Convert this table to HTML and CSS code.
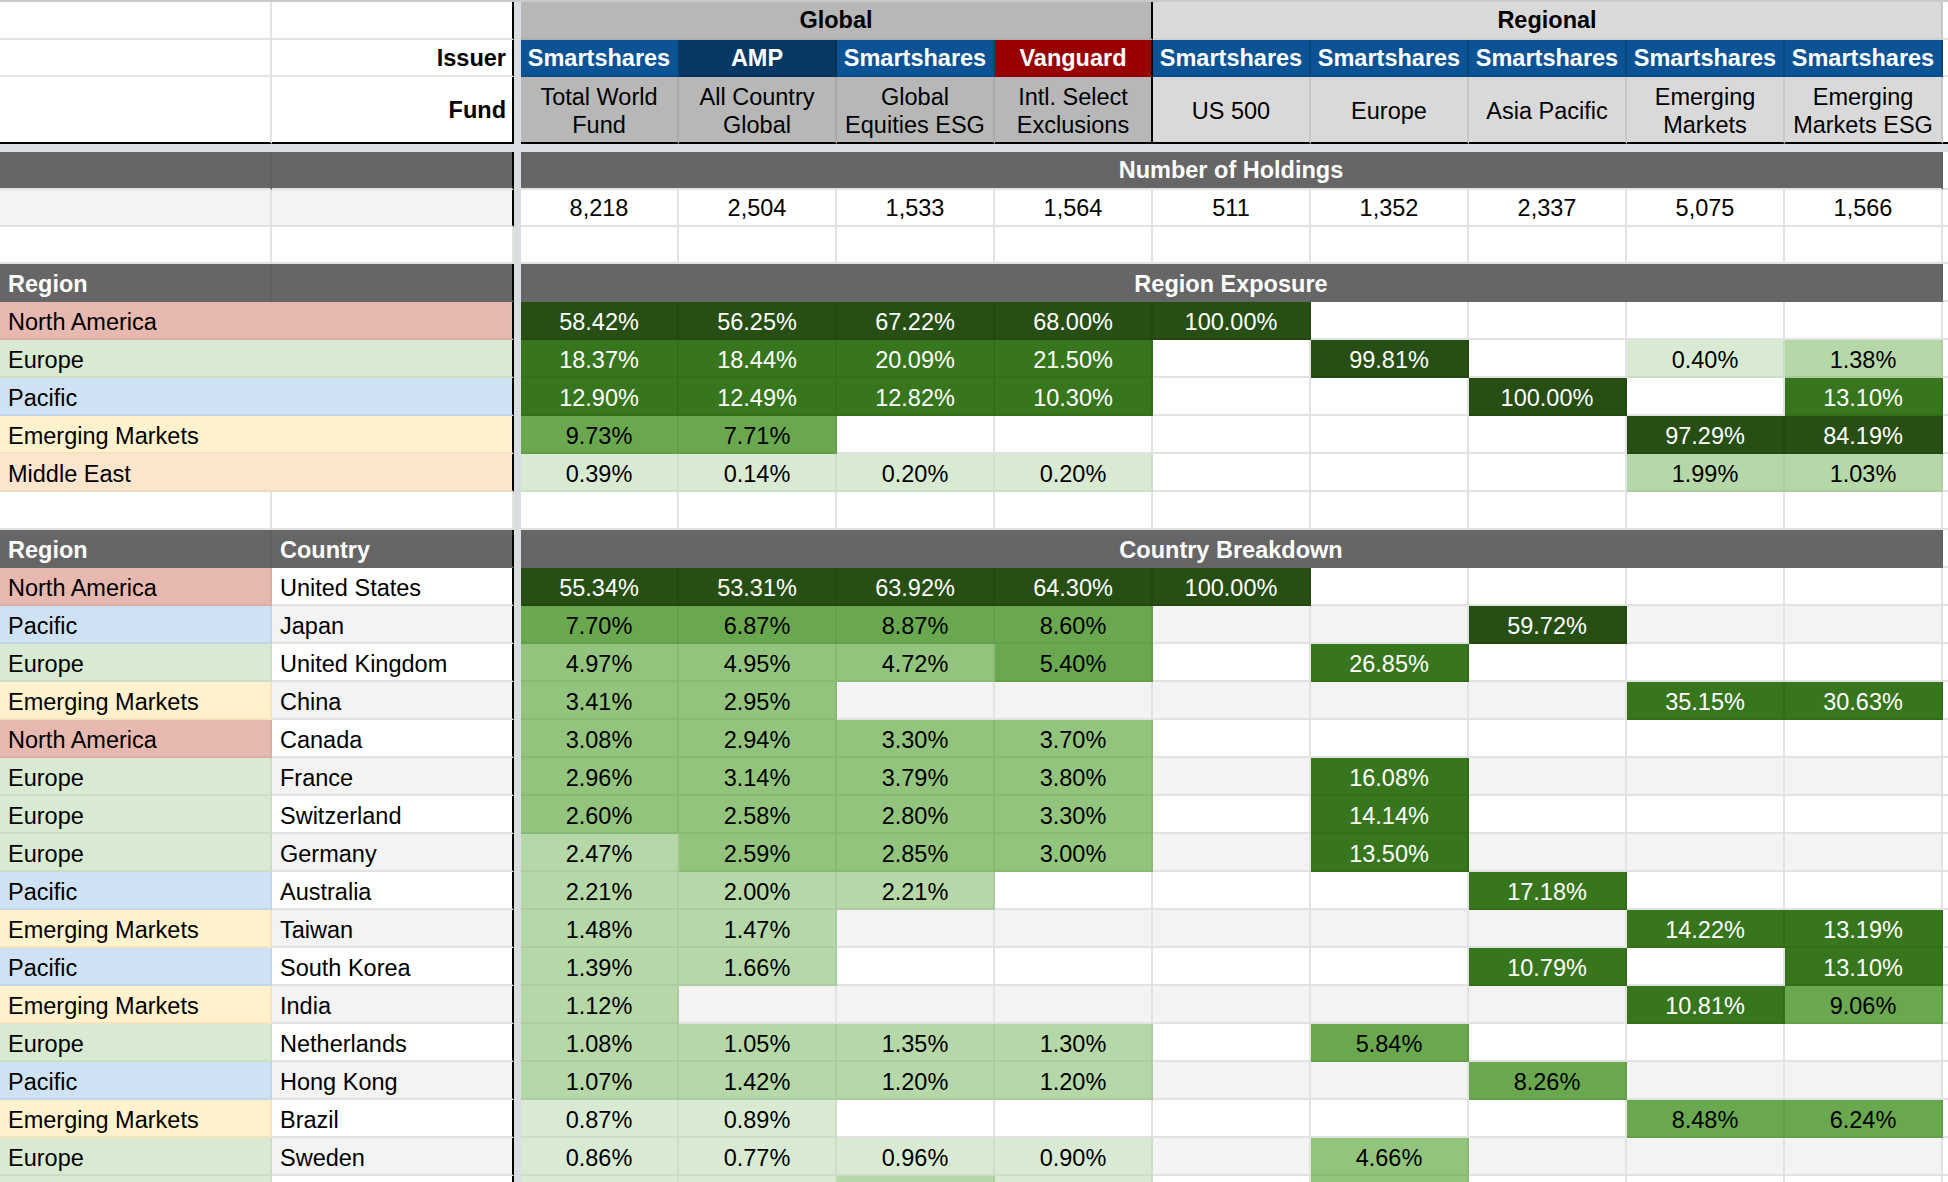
FILE: index.html
```html
<!DOCTYPE html>
<html lang="en">
<head>
<meta charset="utf-8">
<title>Fund Comparison</title>
<link rel="stylesheet" href="styles.css">
</head>
<body>
<div class="sheet">
  <div class="row r1">
    <div class="c"></div>
    <div class="c bk"></div>
    <div class="band"></div>
    <div class="c d grp gl s4 vk">Global</div>
    <div class="c d grp rg s5">Regional</div>
    <div class="fill"></div>
  </div>
  <div class="row r2">
    <div class="c"></div>
    <div class="c bk rt">Issuer</div>
    <div class="band"></div>
    <div class="c d iss blue">Smartshares</div>
    <div class="c d iss navy">AMP</div>
    <div class="c d iss blue">Smartshares</div>
    <div class="c d iss red vk">Vanguard</div>
    <div class="c d iss blue">Smartshares</div>
    <div class="c d iss blue">Smartshares</div>
    <div class="c d iss blue">Smartshares</div>
    <div class="c d iss blue">Smartshares</div>
    <div class="c d iss blue">Smartshares</div>
    <div class="fill"></div>
  </div>
  <div class="row r3">
    <div class="c bb"></div>
    <div class="c bk bb rt">Fund</div>
    <div class="band"></div>
    <div class="c d fund gl"><span>Total World<br>Fund</span></div>
    <div class="c d fund gl"><span>All Country<br>Global</span></div>
    <div class="c d fund gl"><span>Global<br>Equities ESG</span></div>
    <div class="c d fund gl vk"><span>Intl. Select<br>Exclusions</span></div>
    <div class="c d fund rg"><span>US 500</span></div>
    <div class="c d fund rg"><span>Europe</span></div>
    <div class="c d fund rg"><span>Asia Pacific</span></div>
    <div class="c d fund rg"><span>Emerging<br>Markets</span></div>
    <div class="c d fund rg"><span>Emerging<br>Markets ESG</span></div>
    <div class="fill fb"></div>
  </div>
  <div class="hband"></div>

  <div class="row r4">
    <div class="c dk dk-top"></div>
    <div class="c dk dk-top bk"></div>
    <div class="band"></div>
    <div class="c d dk dk-top s9">Number of Holdings</div>
    <div class="fill"></div>
  </div>
  <div class="row r5 alt-lead">
    <div class="c"></div>
    <div class="c bk"></div>
    <div class="band"></div>
    <div class="c d">8,218</div>
    <div class="c d">2,504</div>
    <div class="c d">1,533</div>
    <div class="c d">1,564</div>
    <div class="c d">511</div>
    <div class="c d">1,352</div>
    <div class="c d">2,337</div>
    <div class="c d">5,075</div>
    <div class="c d">1,566</div>
    <div class="fill"></div>
  </div>
  <div class="row r5">
    <div class="c"></div>
    <div class="c"></div>
    <div class="band"></div>
    <div class="c d"></div><div class="c d"></div><div class="c d"></div><div class="c d"></div><div class="c d"></div><div class="c d"></div><div class="c d"></div><div class="c d"></div><div class="c d"></div>
    <div class="fill"></div>
  </div>

  <div class="row low">
    <div class="c dk lbl">Region</div>
    <div class="c dk bk"></div>
    <div class="band"></div>
    <div class="c d dk s9">Region Exposure</div>
    <div class="fill"></div>
  </div>
  <div class="row low">
    <div class="c lbl ab na bk">North America</div>
    <div class="band"></div>
    <div class="c d h0">58.42%</div>
    <div class="c d h0">56.25%</div>
    <div class="c d h0">67.22%</div>
    <div class="c d h0">68.00%</div>
    <div class="c d h0">100.00%</div>
    <div class="c d"></div>
    <div class="c d"></div>
    <div class="c d"></div>
    <div class="c d"></div>
    <div class="fill"></div>
  </div>
  <div class="row low">
    <div class="c lbl ab eu bk">Europe</div>
    <div class="band"></div>
    <div class="c d h1">18.37%</div>
    <div class="c d h1">18.44%</div>
    <div class="c d h1">20.09%</div>
    <div class="c d h1">21.50%</div>
    <div class="c d"></div>
    <div class="c d h0">99.81%</div>
    <div class="c d"></div>
    <div class="c d h5">0.40%</div>
    <div class="c d h4">1.38%</div>
    <div class="fill"></div>
  </div>
  <div class="row low">
    <div class="c lbl ab pa bk">Pacific</div>
    <div class="band"></div>
    <div class="c d h1">12.90%</div>
    <div class="c d h1">12.49%</div>
    <div class="c d h1">12.82%</div>
    <div class="c d h1">10.30%</div>
    <div class="c d"></div>
    <div class="c d"></div>
    <div class="c d h0">100.00%</div>
    <div class="c d"></div>
    <div class="c d h1">13.10%</div>
    <div class="fill"></div>
  </div>
  <div class="row low">
    <div class="c lbl ab em bk">Emerging Markets</div>
    <div class="band"></div>
    <div class="c d h2">9.73%</div>
    <div class="c d h2">7.71%</div>
    <div class="c d"></div>
    <div class="c d"></div>
    <div class="c d"></div>
    <div class="c d"></div>
    <div class="c d"></div>
    <div class="c d h0">97.29%</div>
    <div class="c d h0">84.19%</div>
    <div class="fill"></div>
  </div>
  <div class="row low">
    <div class="c lbl ab me bk">Middle East</div>
    <div class="band"></div>
    <div class="c d h5">0.39%</div>
    <div class="c d h5">0.14%</div>
    <div class="c d h5">0.20%</div>
    <div class="c d h5">0.20%</div>
    <div class="c d"></div>
    <div class="c d"></div>
    <div class="c d"></div>
    <div class="c d h4">1.99%</div>
    <div class="c d h4">1.03%</div>
    <div class="fill"></div>
  </div>
  <div class="row low">
    <div class="c"></div>
    <div class="c"></div>
    <div class="band"></div>
    <div class="c d"></div><div class="c d"></div><div class="c d"></div><div class="c d"></div><div class="c d"></div><div class="c d"></div><div class="c d"></div><div class="c d"></div><div class="c d"></div>
    <div class="fill"></div>
  </div>

  <div class="row low">
    <div class="c dk lbl">Region</div>
    <div class="c dk lbl bk">Country</div>
    <div class="band"></div>
    <div class="c d dk s9">Country Breakdown</div>
    <div class="fill"></div>
  </div>
  <div class="row low">
    <div class="c lbl na">North America</div>
    <div class="c lbl bk">United States</div>
    <div class="band"></div>
    <div class="c d h0">55.34%</div>
    <div class="c d h0">53.31%</div>
    <div class="c d h0">63.92%</div>
    <div class="c d h0">64.30%</div>
    <div class="c d h0">100.00%</div>
    <div class="c d"></div><div class="c d"></div><div class="c d"></div><div class="c d"></div>
    <div class="fill"></div>
  </div>
  <div class="row low alt">
    <div class="c lbl pa">Pacific</div>
    <div class="c lbl bk">Japan</div>
    <div class="band"></div>
    <div class="c d h2">7.70%</div>
    <div class="c d h2">6.87%</div>
    <div class="c d h2">8.87%</div>
    <div class="c d h2">8.60%</div>
    <div class="c d"></div>
    <div class="c d"></div>
    <div class="c d h0">59.72%</div>
    <div class="c d"></div>
    <div class="c d"></div>
    <div class="fill"></div>
  </div>
  <div class="row low">
    <div class="c lbl eu">Europe</div>
    <div class="c lbl bk">United Kingdom</div>
    <div class="band"></div>
    <div class="c d h3">4.97%</div>
    <div class="c d h3">4.95%</div>
    <div class="c d h3">4.72%</div>
    <div class="c d h2">5.40%</div>
    <div class="c d"></div>
    <div class="c d h1">26.85%</div>
    <div class="c d"></div><div class="c d"></div><div class="c d"></div>
    <div class="fill"></div>
  </div>
  <div class="row low alt">
    <div class="c lbl em">Emerging Markets</div>
    <div class="c lbl bk">China</div>
    <div class="band"></div>
    <div class="c d h3">3.41%</div>
    <div class="c d h3">2.95%</div>
    <div class="c d"></div><div class="c d"></div><div class="c d"></div><div class="c d"></div><div class="c d"></div>
    <div class="c d h1">35.15%</div>
    <div class="c d h1">30.63%</div>
    <div class="fill"></div>
  </div>
  <div class="row low">
    <div class="c lbl na">North America</div>
    <div class="c lbl bk">Canada</div>
    <div class="band"></div>
    <div class="c d h3">3.08%</div>
    <div class="c d h3">2.94%</div>
    <div class="c d h3">3.30%</div>
    <div class="c d h3">3.70%</div>
    <div class="c d"></div><div class="c d"></div><div class="c d"></div><div class="c d"></div><div class="c d"></div>
    <div class="fill"></div>
  </div>
  <div class="row low alt">
    <div class="c lbl eu">Europe</div>
    <div class="c lbl bk">France</div>
    <div class="band"></div>
    <div class="c d h3">2.96%</div>
    <div class="c d h3">3.14%</div>
    <div class="c d h3">3.79%</div>
    <div class="c d h3">3.80%</div>
    <div class="c d"></div>
    <div class="c d h1">16.08%</div>
    <div class="c d"></div><div class="c d"></div><div class="c d"></div>
    <div class="fill"></div>
  </div>
  <div class="row low">
    <div class="c lbl eu">Europe</div>
    <div class="c lbl bk">Switzerland</div>
    <div class="band"></div>
    <div class="c d h3">2.60%</div>
    <div class="c d h3">2.58%</div>
    <div class="c d h3">2.80%</div>
    <div class="c d h3">3.30%</div>
    <div class="c d"></div>
    <div class="c d h1">14.14%</div>
    <div class="c d"></div><div class="c d"></div><div class="c d"></div>
    <div class="fill"></div>
  </div>
  <div class="row low alt">
    <div class="c lbl eu">Europe</div>
    <div class="c lbl bk">Germany</div>
    <div class="band"></div>
    <div class="c d h4">2.47%</div>
    <div class="c d h3">2.59%</div>
    <div class="c d h3">2.85%</div>
    <div class="c d h3">3.00%</div>
    <div class="c d"></div>
    <div class="c d h1">13.50%</div>
    <div class="c d"></div><div class="c d"></div><div class="c d"></div>
    <div class="fill"></div>
  </div>
  <div class="row low">
    <div class="c lbl pa">Pacific</div>
    <div class="c lbl bk">Australia</div>
    <div class="band"></div>
    <div class="c d h4">2.21%</div>
    <div class="c d h4">2.00%</div>
    <div class="c d h4">2.21%</div>
    <div class="c d"></div>
    <div class="c d"></div>
    <div class="c d"></div>
    <div class="c d h1">17.18%</div>
    <div class="c d"></div><div class="c d"></div>
    <div class="fill"></div>
  </div>
  <div class="row low alt">
    <div class="c lbl em">Emerging Markets</div>
    <div class="c lbl bk">Taiwan</div>
    <div class="band"></div>
    <div class="c d h4">1.48%</div>
    <div class="c d h4">1.47%</div>
    <div class="c d"></div><div class="c d"></div><div class="c d"></div><div class="c d"></div><div class="c d"></div>
    <div class="c d h1">14.22%</div>
    <div class="c d h1">13.19%</div>
    <div class="fill"></div>
  </div>
  <div class="row low">
    <div class="c lbl pa">Pacific</div>
    <div class="c lbl bk">South Korea</div>
    <div class="band"></div>
    <div class="c d h4">1.39%</div>
    <div class="c d h4">1.66%</div>
    <div class="c d"></div><div class="c d"></div><div class="c d"></div><div class="c d"></div>
    <div class="c d h1">10.79%</div>
    <div class="c d"></div>
    <div class="c d h1">13.10%</div>
    <div class="fill"></div>
  </div>
  <div class="row low alt">
    <div class="c lbl em">Emerging Markets</div>
    <div class="c lbl bk">India</div>
    <div class="band"></div>
    <div class="c d h4">1.12%</div>
    <div class="c d"></div><div class="c d"></div><div class="c d"></div><div class="c d"></div><div class="c d"></div><div class="c d"></div>
    <div class="c d h1">10.81%</div>
    <div class="c d h2">9.06%</div>
    <div class="fill"></div>
  </div>
  <div class="row low">
    <div class="c lbl eu">Europe</div>
    <div class="c lbl bk">Netherlands</div>
    <div class="band"></div>
    <div class="c d h4">1.08%</div>
    <div class="c d h4">1.05%</div>
    <div class="c d h4">1.35%</div>
    <div class="c d h4">1.30%</div>
    <div class="c d"></div>
    <div class="c d h2">5.84%</div>
    <div class="c d"></div><div class="c d"></div><div class="c d"></div>
    <div class="fill"></div>
  </div>
  <div class="row low alt">
    <div class="c lbl pa">Pacific</div>
    <div class="c lbl bk">Hong Kong</div>
    <div class="band"></div>
    <div class="c d h4">1.07%</div>
    <div class="c d h4">1.42%</div>
    <div class="c d h4">1.20%</div>
    <div class="c d h4">1.20%</div>
    <div class="c d"></div>
    <div class="c d"></div>
    <div class="c d h2">8.26%</div>
    <div class="c d"></div><div class="c d"></div>
    <div class="fill"></div>
  </div>
  <div class="row low">
    <div class="c lbl em">Emerging Markets</div>
    <div class="c lbl bk">Brazil</div>
    <div class="band"></div>
    <div class="c d h5">0.87%</div>
    <div class="c d h5">0.89%</div>
    <div class="c d"></div><div class="c d"></div><div class="c d"></div><div class="c d"></div><div class="c d"></div>
    <div class="c d h2">8.48%</div>
    <div class="c d h2">6.24%</div>
    <div class="fill"></div>
  </div>
  <div class="row low alt">
    <div class="c lbl eu">Europe</div>
    <div class="c lbl bk">Sweden</div>
    <div class="band"></div>
    <div class="c d h5">0.86%</div>
    <div class="c d h5">0.77%</div>
    <div class="c d h5">0.96%</div>
    <div class="c d h5">0.90%</div>
    <div class="c d"></div>
    <div class="c d h3">4.66%</div>
    <div class="c d"></div><div class="c d"></div><div class="c d"></div>
    <div class="fill"></div>
  </div>
  <div class="row low">
    <div class="c lbl eu"></div>
    <div class="c lbl bk"></div>
    <div class="band"></div>
    <div class="c d h5"></div>
    <div class="c d h5"></div>
    <div class="c d h4"></div>
    <div class="c d h5"></div>
    <div class="c d"></div>
    <div class="c d h3"></div>
    <div class="c d"></div><div class="c d"></div><div class="c d"></div>
    <div class="fill"></div>
  </div>
</div>
</body>
</html>
```

FILE: styles.css
```css
* {
  box-sizing: border-box;
  margin: 0;
  padding: 0;
}

html,
body {
  width: 1948px;
  height: 1182px;
  overflow: hidden;
  background: #ffffff;
}

body {
  font-family: "Liberation Sans", Arial, sans-serif;
  font-size: 23.5px;
  color: #000000;
}

.sheet {
  border-top: 2px solid #c9c9c9;
}

.row {
  display: grid;
  grid-template-columns: 272px 242px 7px repeat(9, 158px) 5px;
  height: 38px;
}

.r1 { height: 38px; }
.r2 { height: 37px; }
.r3 { height: 67px; }
.r4 { height: 38px; }
.r5 { height: 37px; }

.hband {
  height: 8px;
  background: #d9dde4;
}

.band {
  background: #d9dde4;
}

.fill {
  background: #ffffff;
  border-bottom: 2px solid #e2e2e2;
}

.fb {
  border-bottom-color: #000000;
}

.c {
  display: flex;
  align-items: center;
  white-space: nowrap;
  overflow: hidden;
  line-height: 28px;
  background: #ffffff;
  border-right: 2px solid #e2e2e2;
  border-bottom: 2px solid #e2e2e2;
}

.low > .c {
  padding-top: 3px;
}

.d {
  justify-content: center;
}

.lbl {
  padding-left: 8px;
}

.ab { grid-column: span 2; }
.s4 { grid-column: span 4; }
.s5 { grid-column: span 5; }
.s9 { grid-column: span 9; }

.rt {
  justify-content: flex-end;
  padding-right: 6px;
  font-weight: bold;
}

/* header groups */
.grp {
  font-weight: bold;
  border-bottom-color: rgba(0, 0, 0, 0.04);
}

.gl {
  background: #b7b7b7;
  border-right-color: #a9a9a9;
}

.rg {
  background: #d9d9d9;
  border-right-color: #c7c7c7;
}

.iss {
  color: #ffffff;
  font-weight: bold;
  border-right-color: rgba(0, 0, 0, 0.14);
  border-bottom-color: rgba(0, 0, 0, 0.08);
}

.blue { background: #0b5394; }
.navy { background: #073763; }
.red { background: #990000; }

.fund {
  padding-top: 2px;
  border-bottom-color: #000000;
}

.fund span {
  text-align: center;
}

.bb {
  border-bottom-color: #000000;
}

/* dark section headers */
.c.dk {
  background: #666666;
  color: #ffffff;
  font-weight: bold;
  border-right-color: #616161;
  border-bottom-color: #666666;
}

.c.dk-top {
  border-bottom-color: #e2e2e2;
}

/* alternating rows */
.alt > .c,
.alt-lead > .c:nth-child(-n+2) {
  background: #f3f3f3;
}

/* heat scale */
.c.h0 { background: #274e13; color: #ffffff; border-color: rgba(0, 0, 0, 0.07); }
.c.h1 { background: #38761d; color: #ffffff; border-color: rgba(0, 0, 0, 0.07); }
.c.h2 { background: #6aa84f; border-color: rgba(0, 0, 0, 0.06); }
.c.h3 { background: #93c47d; border-color: rgba(0, 0, 0, 0.06); }
.c.h4 { background: #b6d7a8; border-color: rgba(0, 0, 0, 0.05); }
.c.h5 { background: #d9ead3; border-color: rgba(0, 0, 0, 0.05); }

/* region fills */
.c.na { background: #e6b8af; border-color: rgba(0, 0, 0, 0.05); }
.c.eu { background: #d9ead3; border-color: rgba(0, 0, 0, 0.05); }
.c.pa { background: #cfe2f3; border-color: rgba(0, 0, 0, 0.05); }
.c.em { background: #fff2cc; border-color: rgba(0, 0, 0, 0.05); }
.c.me { background: #fce5cd; border-color: rgba(0, 0, 0, 0.05); }

/* thick black borders */
.c.bk { border-right-color: #000000; }
.c.vk { border-right-color: #000000; }
```
